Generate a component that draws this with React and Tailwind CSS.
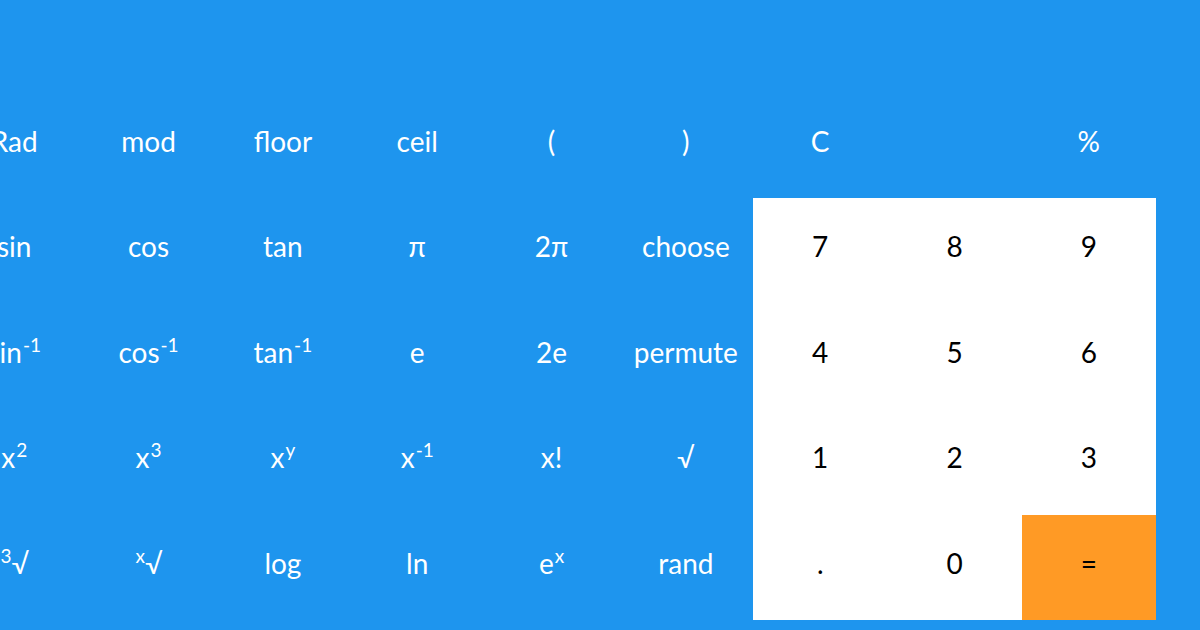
import React from "react";

const Sup = ({ children }) => (
  <sup className="text-[19px] relative -top-[11px] ml-[1px]">{children}</sup>
);

const keys = [
  ["Rad", "mod", "floor", "ceil", "(", ")", "C", "", "%"],
  ["sin", "cos", "tan", "π", "2π", "choose", "7", "8", "9"],
  [
    <>sin<Sup>-1</Sup></>,
    <>cos<Sup>-1</Sup></>,
    <>tan<Sup>-1</Sup></>,
    "e",
    "2e",
    "permute",
    "4",
    "5",
    "6",
  ],
  [
    <>x<Sup>2</Sup></>,
    <>x<Sup>3</Sup></>,
    <>x<Sup>y</Sup></>,
    <>x<Sup>-1</Sup></>,
    "x!",
    "√",
    "1",
    "2",
    "3",
  ],
  [
    <><Sup>3</Sup>√</>,
    <><Sup>x</Sup>√</>,
    "log",
    "ln",
    <>e<Sup>x</Sup></>,
    "rand",
    ".",
    "0",
    "=",
  ],
];

const Key = ({ label, row, col }) => {
  const isNum = row > 0 && col >= 6;
  const isEq = row === 4 && col === 8;
  let cls = "text-white";
  if (isNum) cls = "bg-white text-black";
  if (isEq) cls = "bg-[#ff9a25] text-black";
  return (
    <div className={`flex items-center justify-center pb-[9px] ${cls}`}>
      <span className="leading-none">{label}</span>
    </div>
  );
};

export default function App() {
  return (
    <div
      className="w-[1200px] h-[630px] bg-[#1e95ee] flex justify-end items-end pr-[44px] pb-[10px] overflow-hidden text-[28px]"
      style={{ fontFamily: "Lato, 'Open Sans', sans-serif" }}
    >
      <div className="grid shrink-0 grid-cols-[repeat(9,134.33px)] grid-rows-[repeat(5,105.5px)]">
        {keys.map((row, r) =>
          row.map((k, c) => <Key key={`${r}-${c}`} label={k} row={r} col={c} />)
        )}
      </div>
    </div>
  );
}
